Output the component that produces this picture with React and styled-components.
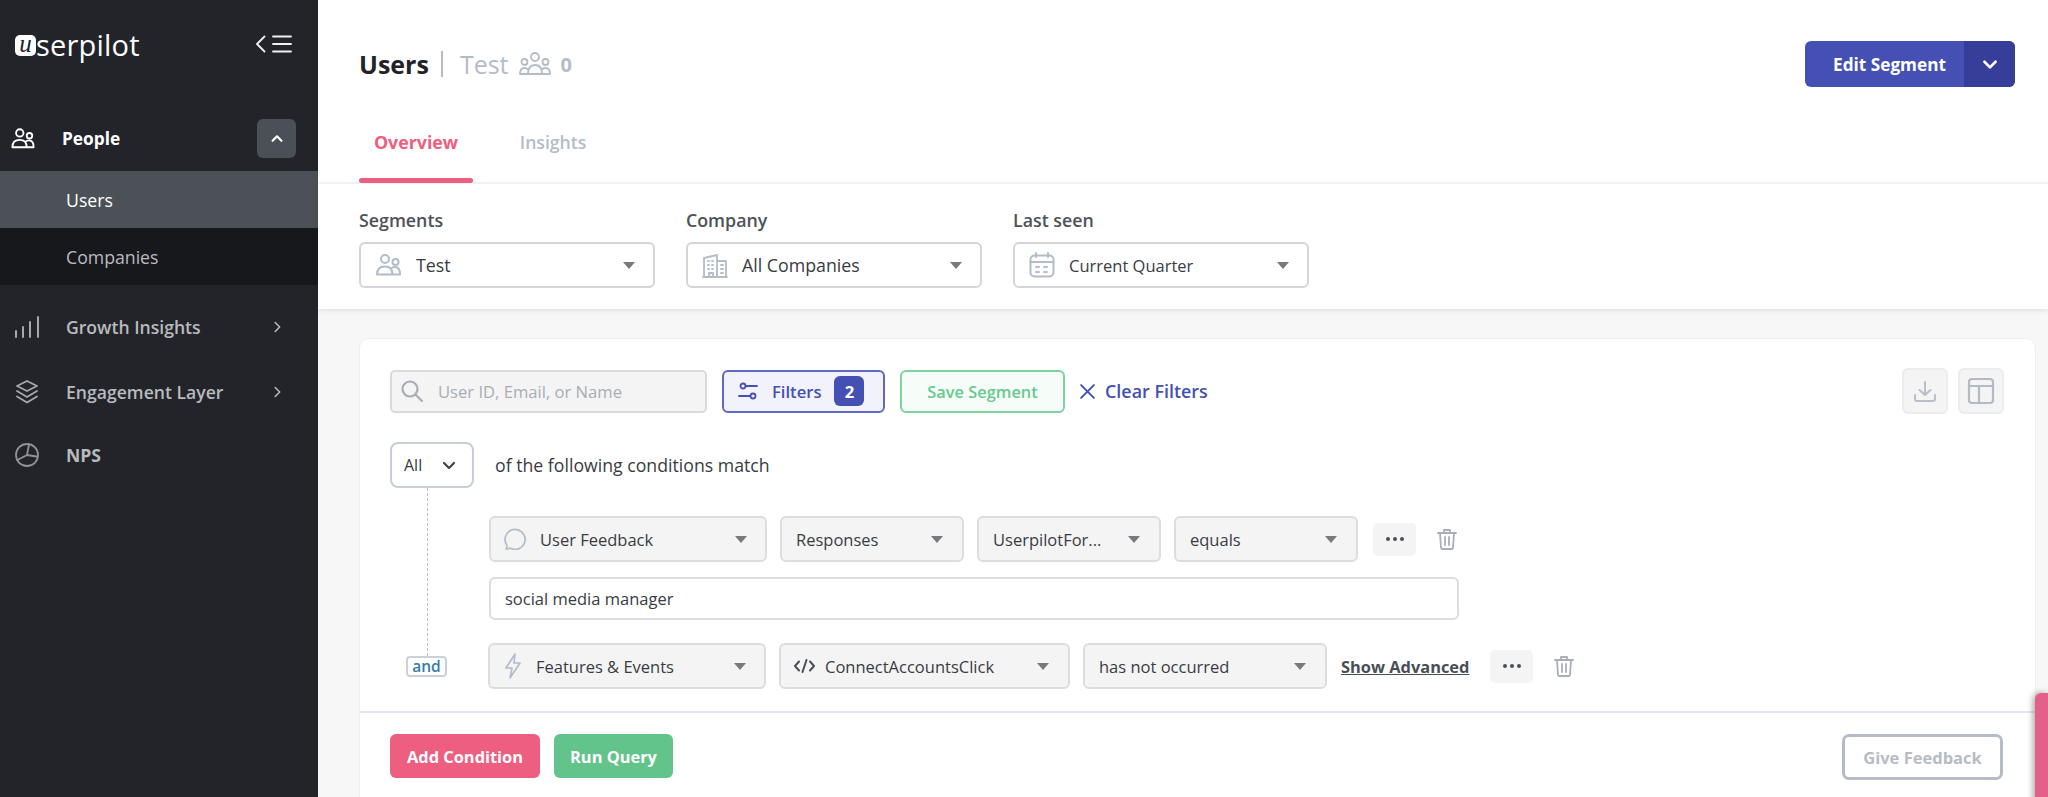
import React from 'react';
import styled, { createGlobalStyle } from 'styled-components';

const Global = createGlobalStyle`
  html, body { margin: 0; padding: 0; height: 100%; overflow: hidden; background: #f7f7f8; }
  body { font-family: "Open Sans", "Noto Sans", sans-serif; }
  #root { height: 100%; }
  * { box-sizing: border-box; }
`;

const Page = styled.div`display: flex; width: 2048px; height: 797px; overflow: hidden; position: relative;`;
const Sidebar = styled.aside`width: 318px; flex: none; background: #22242a; color: #fff;`;
const LogoRow = styled.div`height: 92px; display: flex; align-items: center; justify-content: space-between; padding: 0 26px 4px 15px;`;
const Logo = styled.div`display: flex; align-items: center; font: 400 29px/1 "Open Sans", sans-serif; color: #fff; letter-spacing: .2px;`;
const LogoMark = styled.span`width: 21px; height: 21px; border-radius: 5px; background: #fff; color: #22242a; font: italic 400 25px/18px "Liberation Serif", serif; text-align: center; margin-top: 2px;`;
const PeopleRow = styled.div`height: 79px; padding: 14px 22px 0 11px; display: flex; align-items: center;`;
const PeopleLabel = styled.span`font-size: 17.300px; font-weight: 700; margin-left: 27px; flex: 1; color: #fff;`;
const Toggle = styled.span`width: 39px; height: 39px; border-radius: 6px; background: #4b5056; display: flex; align-items: center; justify-content: center;`;
const SubItem = styled.div`height: 57px; display: flex; align-items: center; padding-left: 66px; font-size: 17.700px; background: ${p => p.$active ? '#4c5157' : '#17181c'}; color: ${p => p.$active ? '#fff' : '#b9bcc0'};`;
const NavItem = styled.div`height: ${p => p.$h || 65}px; display: flex; align-items: center; padding: 0 33px 0 14px; color: #b8babe; font-size: 17.600px; font-weight: 600;`;
const NavLabel = styled.span`flex: 1; margin-left: 26px; font-weight: ${p => p.$bold ? 700 : 600};`;

const Main = styled.main`flex: 1; min-width: 0; display: flex; flex-direction: column;`;
const Header = styled.header`background: #fff; height: 309px; box-shadow: 0 1px 6px rgba(40,40,60,.13); position: relative; flex: none;`;
const TitleRow = styled.div`height: 92px; padding: 36px 33px 0 41px; display: flex; align-items: center; justify-content: space-between;`;
const Title = styled.div`display: flex; align-items: center;`;
const TitleMain = styled.span`font-size: 25px; font-weight: 700; color: #212328;`;
const TitleSep = styled.span`width: 2px; height: 26px; background: #b5bcc6; margin: 0 17px 0 12px;`;
const TitleSub = styled.span`font-size: 25px; color: #b3bcc8; margin-right: 10px;`;
const TitleCount = styled.span`font-size: 20px; font-weight: 700; color: #b3bcc8; margin-left: 10px;`;
const EditButton = styled.div`width: 210px; height: 46px; border-radius: 6px; overflow: hidden; display: flex; color: #fff; font-size: 17.200px; font-weight: 700; background: #4450b3;`;
const EditLabel = styled.span`flex: 1; display: flex; align-items: center; justify-content: center; padding-left: 10px;`;
const EditCaret = styled.span`width: 51px; background: #373e9a; display: flex; align-items: center; justify-content: center;`;
const Tabs = styled.div`height: 92px; border-bottom: 2px solid #f1f2f4; padding-left: 41px; display: flex; align-items: stretch;`;
const Tab = styled.div`
  width: ${p => p.$w}px; height: 92px; display: flex; align-items: center; justify-content: center; padding-top: 8px; position: relative;
  font-size: ${p => p.$active ? 17.800 : 17.600}px; font-weight: ${p => p.$active ? 700 : 600}; color: ${p => p.$active ? '#ee5e80' : '#b3bcc8'};
  ${p => p.$active && `&::after { content: ''; position: absolute; left: 0; right: 0; bottom: 1px; height: 5px; border-radius: 3px; background: #ee5e80; }`}
`;
const Filters = styled.div`display: flex; gap: 31px; padding: 24px 0 0 41px;`;
const Field = styled.div`width: 296px;`;
const FieldLabel = styled.div`font-size: 17.800px; font-weight: 600; color: #4d5259; line-height: 24px; margin-bottom: 10px;`;
const DropBox = styled.div`height: ${p => p.$h || 46}px; width: ${p => p.$w ? p.$w + 'px' : '100%'}; flex: none; border: 2px solid ${p => p.$grey ? '#dcdde0' : '#d3d5d9'}; border-radius: 6px; background: ${p => p.$grey ? '#f4f4f5' : '#fff'}; display: flex; align-items: center; font-size: ${p => p.$fs || 17.800}px; color: #393c42; padding: 0 ${p => p.$pr || 18}px 0 ${p => p.$pl || 14}px; white-space: nowrap;`;
const DropText = styled.span`flex: 1; margin-left: ${p => p.$ml || 0}px;`;
const Caret = styled.span`width: 0; height: 0; border-left: 6.5px solid transparent; border-right: 6.5px solid transparent; border-top: 7px solid #77797e; flex: none;`;

const Content = styled.div`flex: 1; padding: 29px 12px 0 41px; min-height: 0;`;
const Card = styled.section`background: #fff; border: 1px solid #eeeff2; border-radius: 10px 10px 0 0; height: 470px; display: flex; flex-direction: column;`;
const Toolbar = styled.div`display: flex; align-items: center; height: 44px; margin: 30px 31px 0 30px;`;
const Search = styled.div`width: 317px; height: 43px; background: #f4f4f5; border: 2px solid #d9dadd; border-radius: 5px; display: flex; align-items: center; padding-left: 8px; color: #a9adb3; font-size: 16.600px; gap: 14px;`;
const FilterBtn = styled.div`width: 163px; height: 43px; margin-left: 15px; background: #f1f2fb; border: 2px solid #5f69c2; border-radius: 6px; display: flex; align-items: center; padding-left: 14px; color: #4450b3; font-size: 16.600px; font-weight: 600;`;
const FilterLabel = styled.span`margin-left: 14px;`;
const FilterCount = styled.span`width: 30px; height: 30px; background: #4450b3; color: #fff; font-weight: 700; border-radius: 6px; display: flex; align-items: center; justify-content: center; margin-left: 13px;`;
const SaveBtn = styled.div`width: 165px; height: 43px; margin-left: 15px; background: #f6fdf9; border: 2px solid #7fd3a3; border-radius: 6px; color: #68c98f; font-size: 16.400px; font-weight: 600; display: flex; align-items: center; justify-content: center;`;
const ClearBtn = styled.div`display: flex; align-items: center; gap: 9px; margin-left: 14px; color: #4450b3; font-size: 17.900px; font-weight: 600; flex: 1;`;
const SquareBtn = styled.span`width: 46px; height: 46px; background: #f4f4f5; border: 2px solid #ebecee; border-radius: 6px; display: flex; align-items: center; justify-content: center; margin-left: 10px;`;
const MatchRow = styled.div`display: flex; align-items: center; margin: 29px 0 0 30px; font-size: 17.700px; color: #393c42;`;
const AllBox = styled.div`width: 84px; height: 46px; border: 2px solid #c9cfd7; border-radius: 8px; display: flex; align-items: center; padding-left: 12px; gap: 18px; font-size: 16px; color: #393c42; font-weight: 400; margin-right: 21px;`;
const Conditions = styled.div`position: relative; padding: 28px 0 0 129px;`;
const Tree = styled.div`position: absolute; left: 67px; top: 0; height: 168px; border-left: 1px dashed #bcc2ca;`;
const AndTag = styled.span`position: absolute; left: 46px; top: 168px; width: 41px; height: 21px; border: 2px solid #c9d2da; border-radius: 4px; background: #fff; color: #3a7ba3; font-size: 15.500px; font-weight: 600; display: flex; align-items: center; justify-content: center; line-height: 1;`;
const CondRow = styled.div`display: flex; align-items: center; gap: 13px; margin-left: ${p => p.$ml || 0}px;`;
const ValueInput = styled.div`width: 970px; height: 43px; margin: 15px 0 23px; border: 2px solid #dcdde0; border-radius: 6px; padding-left: 14px; font-size: 16.500px; color: #393c42; display: flex; align-items: center;`;
const DotsBtn = styled.span`width: 43px; height: 33px; background: #f4f4f5; border-radius: 5px; display: flex; align-items: center; justify-content: center; margin-left: ${p => p.$ml || 0}px; color: #4a4e55;`;
const ShowAdvanced = styled.span`font-size: 16.400px; font-weight: 700; color: #4a4e55; text-decoration: underline; margin-left: 1px;`;
const TrashWrap = styled.span`display: flex; margin-left: ${p => p.$ml || 0}px;`;
const Footer = styled.div`margin-top: 22px; border-top: 2px solid #e6e6ee; display: flex; align-items: flex-start; padding: 21px 32px 0 30px; gap: 14px;`;
const ActionBtn = styled.div`height: 44px; width: ${p => p.$w}px; background: ${p => p.$bg}; color: #fff; font-size: 16.400px; font-weight: 700; border-radius: 6px; display: flex; align-items: center; justify-content: center;`;
const Spacer = styled.div`flex: 1;`;
const FeedbackBtn = styled.div`width: 161px; height: 46px; border: 3px solid #b6bcc6; border-radius: 7px; color: #b6bcc6; font-size: 16.500px; font-weight: 700; display: flex; align-items: center; justify-content: center;`;
const SideTab = styled.div`position: absolute; right: 0; top: 693px; width: 13px; height: 110px; background: #e3608a; border-radius: 6px 0 0 0; box-shadow: -2px 0 6px rgba(0,0,0,.35);`;

const Ico = ({ w = 24, h = 24, c = '#b3bcc8', sw = 2, vb, children, fill = 'none' }) => (
  <svg width={w} height={h} viewBox={vb || `0 0 ${w} ${h}`} fill={fill} stroke={c} strokeWidth={sw} strokeLinecap="round" strokeLinejoin="round" style={{ flex: 'none' }}>{children}</svg>
);
const PeopleIcon = ({ c, w = 27, h = 22 }) => (
  <Ico w={w} h={h} vb="0 0 26 22" c={c}>
    <circle cx="9.5" cy="5" r="4" /><circle cx="20" cy="8" r="3" />
    <path d="M1.5 20.5c0-5 3-8 8-8s7.500 3 7.500 8zM1.500 20.500h23c0-4.500-1.500-7.500-5-7.500-1.500 0-3 .5-3.800 1.500" />
  </Ico>
);
const Chevron = ({ dir = 'down', c = '#fff', s = 18, sw = 2.4 }) => {
  const d = { down: 'M4 7l5 5 5-5', up: 'M4 11l5-5 5 5', right: 'M7 4l5 5-5 5' }[dir];
  return <Ico w={s} h={s} vb="0 0 18 18" c={c} sw={sw}><path d={d} /></Ico>;
};
const Trash = () => (
  <Ico w={22} h={24} vb="0 0 22 24" c="#a9afb8" sw={1.8}>
    <path d="M2 6h18M8 6V3h6v3M4 6l1 15a1.500 1.500 0 0 0 1.500 1h9a1.500 1.500 0 0 0 1.500-1l1-15M9 10v8M13 10v8" />
  </Ico>
);
const Dots = () => (
  <svg width="20" height="6" viewBox="0 0 20 6" fill="currentColor"><circle cx="3" cy="3" r="2" /><circle cx="10" cy="3" r="2" /><circle cx="17" cy="3" r="2" /></svg>
);

export default function App() {
  return (
    <Page>
      <Global />
      <Sidebar>
        <LogoRow>
          <Logo><LogoMark>u</LogoMark>serpilot</Logo>
          <Ico w={38} h={24} vb="0 0 38 24" c="#eef0f2" sw={1.800}>
            <path d="M10.500 4.500L3 12l7.500 7.500M19 4.500h18M19 12h18M19 19.500h18" />
          </Ico>
        </LogoRow>
        <PeopleRow>
          <PeopleIcon c="#fff" w={24} h={21} />
          <PeopleLabel>People</PeopleLabel>
          <Toggle><Chevron dir="up" s={16} /></Toggle>
        </PeopleRow>
        <SubItem $active>Users</SubItem>
        <SubItem>Companies</SubItem>
        <NavItem $h={83}>
          <Ico w={26} h={24} vb="0 0 26 24" c="#a5a8ad" sw={2}><path d="M2 22v-6M9 22v-10M16 22V7M24 22V2" /></Ico>
          <NavLabel>Growth Insights</NavLabel>
          <Chevron dir="right" c="#b8babe" s={16} sw={1.800} />
        </NavItem>
        <NavItem $h={47}>
          <Ico w={26} h={26} vb="0 0 26 26" c="#a5a8ad" sw={1.800}><path d="M13 2l10 5-10 5L3 7zM3 12l10 6 10-6M3 17.500l10 6 10-6" /></Ico>
          <NavLabel>Engagement Layer</NavLabel>
          <Chevron dir="right" c="#b8babe" s={16} sw={1.800} />
        </NavItem>
        <NavItem $h={79}>
          <Ico w={26} h={26} vb="0 0 26 26" c="#8f9297" sw={1.800}><circle cx="13" cy="13" r="11" /><path d="M13 13l-9.500 5M13 13l9.500 1.500M13 13l2-10.500" /></Ico>
          <NavLabel $bold>NPS</NavLabel>
        </NavItem>
      </Sidebar>
      <Main>
        <Header>
          <TitleRow>
            <Title>
              <TitleMain>Users</TitleMain>
              <TitleSep />
              <TitleSub>Test</TitleSub>
              <Ico w={32} h={24} vb="0 0 32 24" sw={1.800}>
                <circle cx="16" cy="5" r="4" /><circle cx="5.500" cy="10" r="3" /><circle cx="26.500" cy="10" r="3" />
                <path d="M9 22c0-6 2-9 7-9s7 3 7 9zM1 22c0-4 1-6 4.500-6 1 0 2 .2 3 1M31 22c0-4-1-6-4.500-6-1 0-2 .2-3 1M1 22h30" />
              </Ico>
              <TitleCount>0</TitleCount>
            </Title>
            <EditButton>
              <EditLabel>Edit Segment</EditLabel>
              <EditCaret><Chevron s={20} /></EditCaret>
            </EditButton>
          </TitleRow>
          <Tabs>
            <Tab $active $w={114}>Overview</Tab>
            <Tab $w={160}>Insights</Tab>
          </Tabs>
          <Filters>
            <Field>
              <FieldLabel>Segments</FieldLabel>
              <DropBox>
                <PeopleIcon />
                <DropText $ml={14}>Test</DropText>
                <Caret />
              </DropBox>
            </Field>
            <Field>
              <FieldLabel>Company</FieldLabel>
              <DropBox>
                <Ico w={26} h={26} vb="0 0 26 26" sw={1.800}><path d="M2 25V6l13-3v22zM15 9h9v16H15M1 25h24M6 9h1M10 9h1M6 13h1M10 13h1M6 17h1M10 17h1M19 13h2M19 17h2M19 21h2M7 25v-4h4v4" /></Ico>
                <DropText $ml={14}>All Companies</DropText>
                <Caret />
              </DropBox>
            </Field>
            <Field>
              <FieldLabel>Last seen</FieldLabel>
              <DropBox $fs={16.500}>
                <Ico w={26} h={26} vb="0 0 26 26" sw={2}><rect x="1.500" y="3.500" width="23" height="21" rx="4" /><path d="M1.500 10h23M7 1v4M19 1v4M7 15h3M15 15h3M7 20h3M15 20h3" /></Ico>
                <DropText $ml={14}>Current Quarter</DropText>
                <Caret />
              </DropBox>
            </Field>
          </Filters>
        </Header>
        <Content>
          <Card>
            <Toolbar>
              <Search>
                <Ico w={24} h={24} vb="0 0 24 24" c="#a9adb3" sw={2.200}><circle cx="10" cy="10" r="7.500" /><path d="M15.500 15.500L22 22" /></Ico>
                User ID, Email, or Name
              </Search>
              <FilterBtn>
                <Ico w={20} h={18} vb="0 0 20 18" c="#4450b3" sw={1.800}><circle cx="5" cy="4" r="2.500" /><circle cx="15" cy="14" r="2.500" /><path d="M8 4h11M1 14h11" /></Ico>
                <FilterLabel>Filters</FilterLabel>
                <FilterCount>2</FilterCount>
              </FilterBtn>
              <SaveBtn>Save Segment</SaveBtn>
              <ClearBtn>
                <Ico w={17} h={17} vb="0 0 16 16" c="#4450b3" sw={1.800}><path d="M2 2l12 12M14 2L2 14" /></Ico>
                Clear Filters
              </ClearBtn>
              <SquareBtn>
                <Ico w={24} h={24} vb="0 0 24 24" c="#b9bfc8" sw={2}><path d="M12 3v13M6.500 11l5.500 5 5.500-5M2 16v4a2 2 0 0 0 2 2h16a2 2 0 0 0 2-2v-4" /></Ico>
              </SquareBtn>
              <SquareBtn>
                <Ico w={28} h={28} vb="0 0 28 28" c="#b4bac4" sw={2.200}><rect x="2" y="2" width="24" height="24" rx="3" /><path d="M2 9h24M12 9v17" /></Ico>
              </SquareBtn>
            </Toolbar>
            <MatchRow>
              <AllBox>All <Chevron c="#3f434a" s={18} sw={2.200} /></AllBox>
              of the following conditions match
            </MatchRow>
            <Conditions>
              <Tree />
              <AndTag>and</AndTag>
              <CondRow>
                <DropBox $grey $fs={16.500} $w={278} $pl={13} $pr={18}>
                  <Ico w={22} h={22} vb="0 0 22 22" sw={1.700}><path d="M2 21c.5-1 1-2.500.8-4A10 10 0 1 1 6 20c-1.500.8-2.500 1-4 1z" /></Ico>
                  <DropText $ml={14}>User Feedback</DropText><Caret />
                </DropBox>
                <DropBox $grey $fs={16.500} $w={184} $pl={14} $pr={19}><DropText>Responses</DropText><Caret /></DropBox>
                <DropBox $grey $fs={16.500} $w={184} $pl={14} $pr={19}><DropText>UserpilotFor...</DropText><Caret /></DropBox>
                <DropBox $grey $fs={16.500} $w={184} $pl={14} $pr={19}><DropText>equals</DropText><Caret /></DropBox>
                <DotsBtn $ml={2}><Dots /></DotsBtn>
                <TrashWrap $ml={7}><Trash /></TrashWrap>
              </CondRow>
              <ValueInput>social media manager</ValueInput>
              <CondRow $ml={-1}>
                <DropBox $grey $fs={16.500} $w={278} $pl={14} $pr={18}>
                  <Ico w={18} h={26} vb="0 0 18 26" sw={1.700}><path d="M11 1L2 15h6l-2 10 10-15h-6z" /></Ico>
                  <DropText $ml={14}>Features &amp; Events</DropText><Caret />
                </DropBox>
                <DropBox $grey $fs={16.500} $w={291} $pl={13} $pr={19}>
                  <Ico w={21} h={14} vb="0 0 21 14" c="#4a4e55" sw={2}><path d="M5 2.500L1 7l4 4.500M16 2.500L20 7l-4 4.500M12.500 1L8.500 13" /></Ico>
                  <DropText $ml={10}>ConnectAccountsClick</DropText><Caret />
                </DropBox>
                <DropBox $grey $fs={16.500} $w={244} $pl={14} $pr={19}><DropText>has not occurred</DropText><Caret /></DropBox>
                <ShowAdvanced>Show Advanced</ShowAdvanced>
                <DotsBtn $ml={8}><Dots /></DotsBtn>
                <TrashWrap $ml={7}><Trash /></TrashWrap>
              </CondRow>
            </Conditions>
            <Footer>
              <ActionBtn $bg="#ee5e80" $w={150}>Add Condition</ActionBtn>
              <ActionBtn $bg="#62c48b" $w={119}>Run Query</ActionBtn>
              <Spacer />
              <FeedbackBtn>Give Feedback</FeedbackBtn>
            </Footer>
          </Card>
        </Content>
      </Main>
      <SideTab />
    </Page>
  );
}
